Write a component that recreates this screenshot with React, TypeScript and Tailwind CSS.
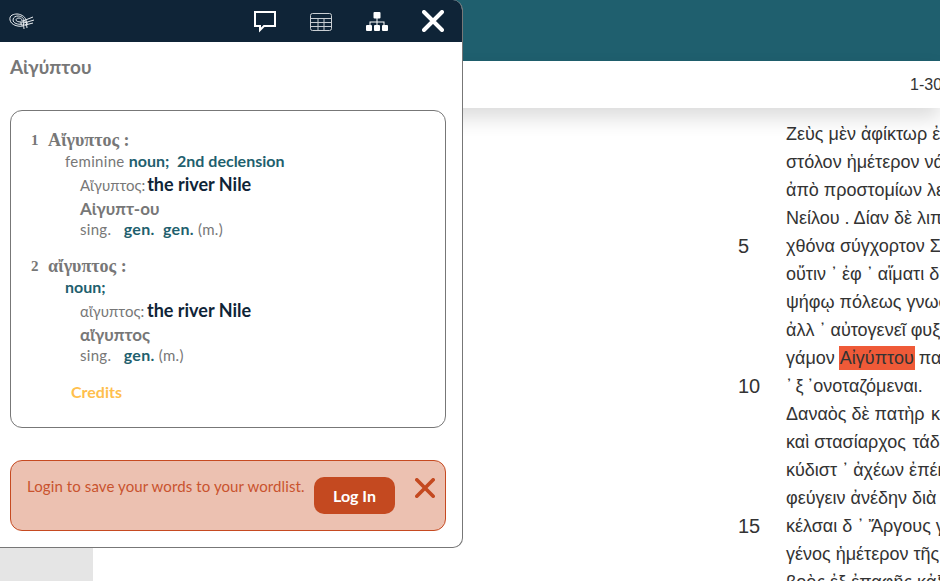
import React from 'react';

const lines = [
  { text: 'Ζεὺς μὲν ἀφίκτωρ ἐπίδοι προφρόνως' },
  { text: 'στόλον ἡμέτερον νάιον ἀρθέντ᾿' },
  { text: 'ἀπὸ προστομίων λεπτοψαμάθων' },
  { text: 'Νείλου . Δίαν δὲ λιποῦσαι' },
  { text: 'χθόνα σύγχορτον Συρίᾳ φεύγομεν,', num: 5 },
  { text: 'οὔτιν᾿ ἐφ᾿ αἵματι δημηλασίαν' },
  { text: 'ψήφῳ πόλεως γνωσθεῖσαι,' },
  { text: 'ἀλλ᾿ αὐτογενεῖ φυξανορίᾳ,' },
  { text: 'γάμον', hl: 'Αἰγύπτου', after: 'παίδων ἀσεβῆ' },
  { text: '᾽\u2009ξ\u2009᾽ονοταζόμεναι.', num: 10 },
  { text: 'Δαναὸς δὲ πατὴρ\u200a καὶ βούλαρχος' },
  { text: 'καὶ στασίαρχος\u200a τάδε πεσσονομῶν' },
  { text: 'κύδιστ᾿ ἀχέων ἐπέκρανεν,' },
  { text: 'φεύγειν ἀνέδην διὰ κῦμ᾿ ἅλιον,' },
  { text: 'κέλσαι δ᾿ Ἄργους γαῖαν, ὅθεν δὴ', num: 15 },
  { text: 'γένος ἡμέτερον τῆς οἰστροδόνου' },
  { text: 'βοὸς ἐξ ἐπαφῆς κἀξ ἐπιπνοίας' },
];

const Logo = () => (
  <svg width="27" height="20" viewBox="0 0 27 20" fill="none" stroke="#e8ecef" strokeWidth="1">
    <path d="M15 15c-5 1-12-1-13-6s4-6 7-6 8 2 9 6" />
    <path d="M14 13c-4 1-9-1-9-4s3-4 5-4 6 1 6 5" />
    <path d="M13 11c-3 0-5-1-5-2s1-2 3-2 3 1 3 3" />
    <path d="M15 10l10-4M16 12l10-3M17 14l8-2" />
    <path d="M15 9l1 9M18 9l1 8M13 11h6v3h-6z" />
  </svg>
);

const CommentIcon = () => (
  <svg width="22" height="22" viewBox="0 0 22 22" fill="none" stroke="#fff" strokeWidth="2">
    <path d="M1 1h20v14H10l-4 4v-4H1z" strokeLinejoin="miter" />
  </svg>
);

const TableIcon = () => (
  <svg width="22" height="19" viewBox="0 0 22 19" fill="none" stroke="#c9ced3" strokeWidth="1">
    <rect x="0.5" y="0.5" width="21" height="17" rx="2" />
    <path d="M1 5.5h20M1 9.5h20M1 13.5h20M8 6v11M14 6v11" />
  </svg>
);

const TreeIcon = () => (
  <svg width="22" height="20" viewBox="0 0 22 20" fill="#fff">
    <rect x="7.5" y="0" width="7" height="6.5" rx="1" />
    <path d="M10.5 6h1v3.5h7V13h-1v-2.5h-6V13h-1v-2.5h-6V13h-1V9.5h7z" />
    <rect x="0" y="13" width="6" height="6" rx="1" />
    <rect x="8" y="13" width="6" height="6" rx="1" />
    <rect x="16" y="13" width="6" height="6" rx="1" />
  </svg>
);

const CloseIcon = ({ size, color, width }: { size: number; color: string; width: number }) => (
  <svg width={size} height={size} viewBox="0 0 22 22" fill="none" stroke={color} strokeWidth={width} strokeLinecap="round">
    <path d="M2 2l18 18M20 2L2 20" />
  </svg>
);

export default function App() {
  return (
    <div className="relative h-[581px] w-[940px] overflow-hidden bg-white font-['Lato','Noto_Sans',sans-serif]">
      {/* page behind the popup */}
      <div className="h-[61px] bg-[#1f5f6e]" />
      <div className="relative z-10 flex h-[47px] items-center justify-end bg-white shadow-[0_10px_20px_rgba(0,0,0,0.14)]">
        <span className="w-[30px] overflow-hidden whitespace-nowrap font-['Liberation_Sans',sans-serif] text-[16px] text-[#333]">1-30</span>
      </div>
      <div className="flex h-[473px]">
        <div className="w-[93px] shrink-0 bg-[#e5e5e5]" />
        <div className="min-w-0 flex-1 overflow-hidden pt-[12px] font-['Liberation_Sans',sans-serif] text-[#333]">
          {lines.map((line, i) => (
            <div key={i} className="flex h-[28px] items-center whitespace-nowrap pl-[645px] text-[18px]">
              <span className="w-[48px] shrink-0 text-[20px]">{line.num}</span>
              <span>
                {line.text.replace(/᾿/g, '\u2009\u200a᾿')}
                {line.hl && (
                  <>
                    {' '}
                    <span className="-mx-px bg-[#ef5a38] px-px py-[2px]">{line.hl}</span> {line.after}
                  </>
                )}
              </span>
            </div>
          ))}
        </div>
      </div>

      {/* word popup */}
      <div className="absolute left-0 top-0 z-20 flex h-[548px] w-[463px] flex-col overflow-hidden rounded-br-[10px] rounded-tr-[10px] border-b border-r border-[#777] bg-white">
        <div className="flex h-[42px] shrink-0 items-center bg-[#0f2437] pl-[8px]">
          <Logo />
          <div className="ml-auto flex items-center">
            <span className="mr-[34px] mt-[1px]"><CommentIcon /></span>
            <span className="mr-[34px] mt-[3px]"><TableIcon /></span>
            <span className="mr-[34px] mt-[1px]"><TreeIcon /></span>
            <span className="mr-[18px]"><CloseIcon size={22} color="#fff" width={4} /></span>
          </div>
        </div>
        <div className="pl-[10px] pt-[13px] text-[19px] font-bold leading-[24px] text-[#777]">Αἰγύπτου</div>

        <div className="ml-[10px] mt-[31px] h-[318px] w-[436px] shrink-0 rounded-[12px] border border-[#777] pl-[20px] pt-[19px]">
          <div className="flex h-[20px] items-center font-['Liberation_Serif',serif] text-[18px] font-bold text-[#777]">
            <span className="w-[17px] text-[15px]">1</span>Αἴγυπτος :
          </div>
          <div className="h-[22px] pl-[34px] text-[15px] leading-[22px] tracking-[0.3px] text-[#777]">
            feminine <b className="text-[16px] leading-none tracking-normal text-[#1f5f6e]">noun;&nbsp; 2nd declension</b>
          </div>
          <div className="h-[26px] pl-[49px] text-[15px] leading-[26px] text-[#777]">
            Αἴγυπτος: <b className="-ml-[2px] text-[18px] leading-none text-[#0f2437]">the river Nile</b>
          </div>
          <div className="h-[22px] pl-[49px] text-[17px] font-bold leading-[22px] text-[#777]">Αἰγυπτ-ου</div>
          <div className="h-[18px] pl-[49px] text-[15px] leading-[18px] tracking-[0.3px] text-[#777]">
            sing. &nbsp; <b className="text-[16px] leading-none text-[#1f5f6e]">gen.&nbsp; gen.</b> (m.)
          </div>

          <div className="mt-[18px] flex h-[20px] items-center font-['Liberation_Serif',serif] text-[18px] font-bold text-[#777]">
            <span className="w-[17px] text-[15px]">2</span>αἴγυπτος :
          </div>
          <div className="h-[22px] pl-[34px] text-[16px] font-bold leading-[22px] text-[#1f5f6e]">noun;</div>
          <div className="h-[26px] pl-[49px] text-[15px] leading-[26px] text-[#777]">
            αἴγυπτος: <b className="-ml-[1px] text-[18px] leading-none text-[#0f2437]">the river Nile</b>
          </div>
          <div className="h-[22px] pl-[49px] text-[17px] font-bold leading-[22px] text-[#777]">αἴγυπτος</div>
          <div className="h-[18px] pl-[49px] text-[15px] leading-[18px] tracking-[0.3px] text-[#777]">
            sing. &nbsp; <b className="text-[16px] leading-none text-[#1f5f6e]">gen.</b> (m.)
          </div>

          <div className="mt-[18px] pl-[40px] text-[16px] font-bold leading-[20px] text-[#ffbf4d]">Credits</div>
        </div>

        <div className="ml-[10px] mt-[32px] flex h-[71px] w-[436px] shrink-0 rounded-[12px] border border-[#c64a21] bg-[#ecc1b1] pl-[16px] pt-[16px]">
          <span className="w-[287px] text-[15px] leading-[18px] tracking-[0.1px] text-[#c9532e]">Login to save your words to your wordlist.</span>
          <button className="h-[37px] w-[81px] rounded-[10px] bg-[#c44920] text-[16px] font-bold text-white">Log In</button>
          <span className="ml-[20px] mt-[1px]"><CloseIcon size={20} color="#c44920" width={4} /></span>
        </div>
      </div>
    </div>
  );
}
